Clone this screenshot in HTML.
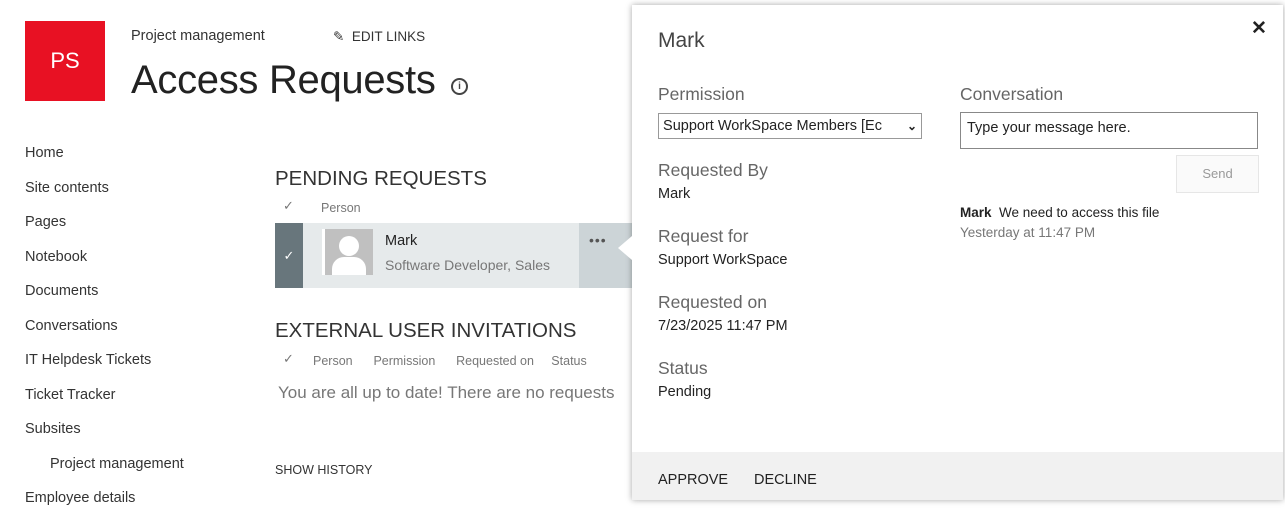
<!DOCTYPE html>
<html><head><style>
body{margin:0;width:1285px;height:513px;background:#fff;font-family:"Liberation Sans",sans-serif;position:relative;overflow:hidden;color:#333}
.a{position:absolute;white-space:nowrap}
.nav{font-size:14.5px;color:#333}
.lbl{font-size:17.5px;color:#666}
.val{font-size:14.5px;color:#222}
</style></head><body>
<div class="a" style="left:25px;top:21px;width:80px;height:80px;background:#e81123;color:#fff;font-size:22px;line-height:80px;text-align:center">PS</div>
<div class="a" style="left:131px;top:28px;font-size:14.5px;color:#333">Project management</div>
<div class="a" style="left:333px;top:29px;font-size:13.5px;color:#333">✎&nbsp; EDIT LINKS</div>
<div class="a" style="left:131px;top:58px;font-size:40px;color:#222;letter-spacing:-0.3px">Access Requests</div>
<div class="a" style="left:451px;top:78px;width:13px;height:13px;border:2px solid #444;border-radius:50%;font-size:10px;font-weight:bold;text-align:center;line-height:13px;color:#444">i</div>
<div class="a nav" style="left:25px;top:145px">Home</div>
<div class="a nav" style="left:25px;top:180px">Site contents</div>
<div class="a nav" style="left:25px;top:214px">Pages</div>
<div class="a nav" style="left:25px;top:249px">Notebook</div>
<div class="a nav" style="left:25px;top:283px">Documents</div>
<div class="a nav" style="left:25px;top:318px">Conversations</div>
<div class="a nav" style="left:25px;top:352px">IT Helpdesk Tickets</div>
<div class="a nav" style="left:25px;top:387px">Ticket Tracker</div>
<div class="a nav" style="left:25px;top:421px">Subsites</div>
<div class="a nav" style="left:50px;top:456px">Project management</div>
<div class="a nav" style="left:25px;top:490px">Employee details</div>
<div class="a" style="left:275px;top:167px;font-size:20.5px;color:#333">PENDING REQUESTS</div>
<div class="a" style="left:283px;top:198px;font-size:13px;color:#777">✓</div>
<div class="a" style="left:321px;top:201px;font-size:12.5px;color:#777">Person</div>
<div class="a" style="left:275px;top:223px;width:28px;height:65px;background:#68767c;color:#fff;font-size:13px;text-align:center;line-height:65px">✓</div>
<div class="a" style="left:303px;top:223px;width:276px;height:65px;background:#e6eaeb"></div>
<div class="a" style="left:579px;top:223px;width:53px;height:65px;background:#ccd4d7"></div>
<div class="a" style="left:589px;top:232px;font-size:14px;color:#555;letter-spacing:1px">•••</div>
<div class="a" style="left:322px;top:229px;width:51px;height:46px;background:#fff"></div>
<div class="a" style="left:325px;top:229px;width:48px;height:46px;background:#c0c0c0;overflow:hidden"><div style="position:absolute;left:14px;top:7px;width:20px;height:20px;border-radius:50%;background:#fff"></div><div style="position:absolute;left:7px;top:28px;width:34px;height:30px;border-radius:12px 12px 0 0;background:#fff"></div></div>
<div class="a" style="left:385px;top:233px;font-size:14.5px;color:#222">Mark</div>
<div class="a" style="left:385px;top:257px;font-size:14px;color:#777">Software Developer, Sales</div>
<div class="a" style="left:275px;top:319px;font-size:20.5px;color:#333">EXTERNAL USER INVITATIONS</div>
<div class="a" style="left:283px;top:351px;font-size:13px;color:#777">✓</div>
<div class="a" style="left:313px;top:354px;font-size:12.5px;color:#777">Person&nbsp;&nbsp;&nbsp;&nbsp;&nbsp;&nbsp;Permission&nbsp;&nbsp;&nbsp;&nbsp;&nbsp;&nbsp;Requested on&nbsp;&nbsp;&nbsp;&nbsp;&nbsp;Status</div>
<div class="a" style="left:278px;top:383px;font-size:17px;color:#777">You are all up to date! There are no requests</div>
<div class="a" style="left:275px;top:463px;font-size:12.5px;color:#333">SHOW HISTORY</div>
<div class="a" style="left:632px;top:5px;width:651px;height:495px;background:#fff;box-shadow:0 0 6px rgba(0,0,0,.35)"></div>
<div class="a" style="left:618px;top:236px;width:0;height:0;border-top:12px solid transparent;border-bottom:12px solid transparent;border-right:14px solid #fff"></div>
<div class="a" style="left:632px;top:452px;width:651px;height:48px;background:#f1f1f1"></div>
<div class="a" style="left:1251px;top:17px;font-size:19px;font-weight:bold;color:#222">✕</div>
<div class="a" style="left:658px;top:29px;font-size:21px;color:#444">Mark</div>
<div class="a lbl" style="left:658px;top:84px">Permission</div>
<div class="a" style="left:658px;top:113px;width:262px;height:24px;border:1px solid #999;font-size:14.5px;line-height:24px;overflow:hidden;color:#222">&nbsp;Support WorkSpace Members [Ec<span style="position:absolute;right:0;top:0;width:14px;background:#fff;font-size:12px;font-weight:bold">⌄</span></div>
<div class="a lbl" style="left:658px;top:160px">Requested By</div>
<div class="a val" style="left:658px;top:186px">Mark</div>
<div class="a lbl" style="left:658px;top:226px">Request for</div>
<div class="a val" style="left:658px;top:252px">Support WorkSpace</div>
<div class="a lbl" style="left:658px;top:292px">Requested on</div>
<div class="a val" style="left:658px;top:318px">7/23/2025 11:47 PM</div>
<div class="a lbl" style="left:658px;top:358px">Status</div>
<div class="a val" style="left:658px;top:384px">Pending</div>
<div class="a lbl" style="left:960px;top:84px">Conversation</div>
<div class="a" style="left:960px;top:112px;width:298px;height:37px;border:1px solid #888;font-size:14.5px;color:#222;padding:0 0 0 6px;box-sizing:border-box;line-height:30px">Type your message here.</div>
<div class="a" style="left:1176px;top:155px;width:81px;height:36px;border:1px solid #e6e6e6;background:#fafafa;font-size:13px;color:#999;text-align:center;line-height:36px">Send</div>
<div class="a" style="left:960px;top:205px;font-size:13.5px;color:#222"><b>Mark</b>&nbsp; We need to access this file</div>
<div class="a" style="left:960px;top:225px;font-size:13.5px;color:#777">Yesterday at 11:47 PM</div>
<div class="a" style="left:658px;top:472px;font-size:14.5px;color:#222">APPROVE</div>
<div class="a" style="left:754px;top:472px;font-size:14.5px;color:#222">DECLINE</div>
</body></html>
